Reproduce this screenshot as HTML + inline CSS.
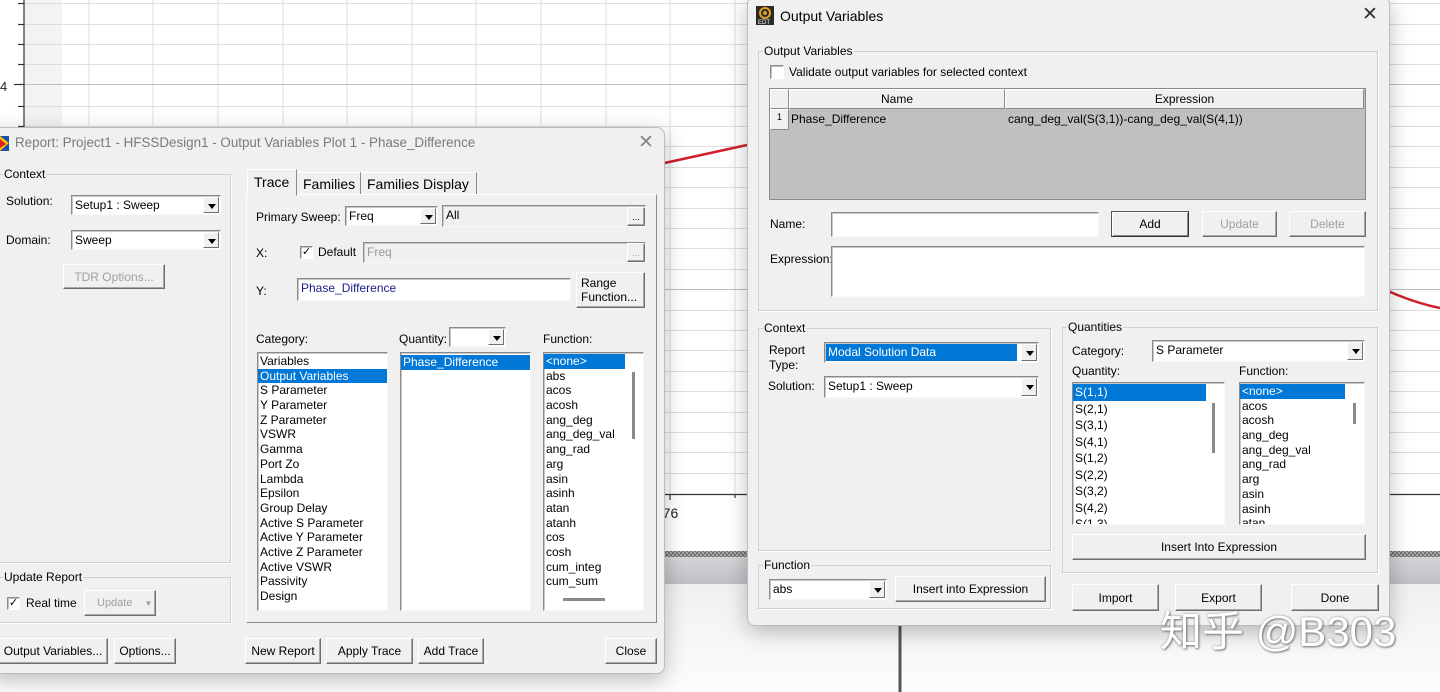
<!DOCTYPE html>
<html><head><meta charset="utf-8">
<style>
*{box-sizing:border-box;margin:0;padding:0}
body{width:1440px;height:692px;overflow:hidden;position:relative;background:#fff;font-family:"Liberation Sans",Arial,sans-serif;font-size:11px;color:#000}
.a{position:absolute}
.t{position:absolute;white-space:nowrap;line-height:13px}
.grp{position:absolute;border:1px solid #cfcfcf;box-shadow:1px 1px 0 #fff}
.grp>span{position:absolute;top:-8px;left:4px;background:#f0f0f0;padding:0 1px;line-height:14px;font-size:12px}
.btn{position:absolute;background:#f0f0f0;border:1px solid;border-color:#fff #6e6e6e #6e6e6e #fff;box-shadow:inset -1px -1px #a8a8a8;text-align:center;font-size:12px;display:flex;align-items:center;justify-content:center;white-space:nowrap}
.dis{color:#a0a0a0}
.in{position:absolute;background:#fff;border:1px solid;border-color:#8a8a8a #f8f8f8 #f8f8f8 #8a8a8a;box-shadow:inset 1px 1px #c8c8c8;padding-left:3px;line-height:19px;white-space:nowrap;overflow:hidden;font-size:12px}
.cb{position:absolute;background:#fff;border:1px solid;border-color:#8a8a8a #f8f8f8 #f8f8f8 #8a8a8a;box-shadow:inset 1px 1px #c8c8c8;padding-left:3px;line-height:19px;font-size:12px;white-space:nowrap}
.cb i{position:absolute;right:1px;top:1px;bottom:1px;width:16px;background:#f0f0f0;border:1px solid;border-color:#fff #6e6e6e #6e6e6e #fff}
.cb i:after{content:"";position:absolute;left:4px;top:6px;border-left:4px solid transparent;border-right:4px solid transparent;border-top:5px solid #000}
.list{position:absolute;background:#fff;border:1px solid;border-color:#8a8a8a #f8f8f8 #f8f8f8 #8a8a8a;box-shadow:inset 1px 1px #c8c8c8;overflow:hidden;font-size:12px}
.list div{height:14.7px;line-height:14.7px;padding-left:2px;white-space:nowrap}
.sel{background:#0078d7;color:#fff}
.chk{position:absolute;width:13px;height:13px;background:#fff;border:1px solid;border-color:#8a8a8a #fff #fff #8a8a8a;box-shadow:inset 1px 1px #c0c0c0;font-size:11px;line-height:11px;text-align:center}
.dlg{position:absolute;background:#f0f0f0;border:1px solid #bdbdbd;border-radius:8px;box-shadow:0 6px 22px rgba(0,0,0,.25)}
</style></head><body>

<svg class="a" style="left:0;top:0" width="1440" height="692">
<defs>
<linearGradient id="gb" x1="0" y1="0" x2="0" y2="1"><stop offset="0" stop-color="#d4d5d8"/><stop offset="1" stop-color="#bfc0c4"/></linearGradient>
<linearGradient id="gw" x1="0" y1="0" x2="0" y2="1"><stop offset="0" stop-color="#f0f0f0"/><stop offset="1" stop-color="#fdfdfd"/></linearGradient>
<pattern id="ck" width="4" height="4" patternUnits="userSpaceOnUse"><rect width="4" height="4" fill="#a8a8a8"/><rect width="2" height="2" fill="#707070"/><rect x="2" y="2" width="2" height="2" fill="#707070"/></pattern>
</defs>
<rect x="24" y="0" width="38" height="494" fill="#f3f3f3"/>
<g stroke="#dedede" stroke-width="1">
<line x1="89" y1="0" x2="89" y2="494"/><line x1="153" y1="0" x2="153" y2="494"/><line x1="218" y1="0" x2="218" y2="494"/><line x1="283" y1="0" x2="283" y2="494"/><line x1="347" y1="0" x2="347" y2="494"/><line x1="412" y1="0" x2="412" y2="494"/><line x1="476" y1="0" x2="476" y2="494"/><line x1="541" y1="0" x2="541" y2="494"/><line x1="606" y1="0" x2="606" y2="494"/><line x1="670" y1="0" x2="670" y2="494"/><line x1="735" y1="0" x2="735" y2="494"/>
<line x1="24" y1="3.5" x2="1440" y2="3.5"/><line x1="24" y1="24.5" x2="1440" y2="24.5"/><line x1="24" y1="44.5" x2="1440" y2="44.5"/><line x1="24" y1="64.5" x2="1440" y2="64.5"/><line x1="24" y1="106.5" x2="1440" y2="106.5"/><line x1="24" y1="126.5" x2="1440" y2="126.5"/>
<line x1="24" y1="146.5" x2="1440" y2="146.5"/><line x1="24" y1="167.5" x2="1440" y2="167.5"/><line x1="24" y1="187.5" x2="1440" y2="187.5"/><line x1="24" y1="208.5" x2="1440" y2="208.5"/><line x1="24" y1="228.5" x2="1440" y2="228.5"/><line x1="24" y1="248.5" x2="1440" y2="248.5"/><line x1="24" y1="269.5" x2="1440" y2="269.5"/><line x1="24" y1="310.5" x2="1440" y2="310.5"/><line x1="24" y1="330.5" x2="1440" y2="330.5"/><line x1="24" y1="350.5" x2="1440" y2="350.5"/><line x1="24" y1="371.5" x2="1440" y2="371.5"/><line x1="24" y1="391.5" x2="1440" y2="391.5"/><line x1="24" y1="412.5" x2="1440" y2="412.5"/><line x1="24" y1="432.5" x2="1440" y2="432.5"/><line x1="24" y1="452.5" x2="1440" y2="452.5"/><line x1="24" y1="473.5" x2="1440" y2="473.5"/>
</g>
<g stroke="#bdbdbd"><line x1="24" y1="84.5" x2="1440" y2="84.5"/><line x1="24" y1="289.5" x2="1440" y2="289.5"/></g>
<g stroke="#333" stroke-width="1.2">
<line x1="24" y1="0" x2="24" y2="130"/>
<line x1="18" y1="3.5" x2="24" y2="3.5"/><line x1="18" y1="24.5" x2="24" y2="24.5"/><line x1="18" y1="44.5" x2="24" y2="44.5"/><line x1="18" y1="64.5" x2="24" y2="64.5"/><line x1="14" y1="84.5" x2="24" y2="84.5"/><line x1="18" y1="106.5" x2="24" y2="106.5"/><line x1="18" y1="126.5" x2="24" y2="126.5"/>
<line x1="0" y1="494.5" x2="1440" y2="494.5"/><line x1="670" y1="494" x2="670" y2="500"/><line x1="735" y1="494" x2="735" y2="498"/>
</g>
<text x="0" y="91" font-family="Liberation Sans" font-size="13" fill="#222">4</text>
<text x="651" y="518" font-family="Liberation Sans" font-size="14" fill="#222">3.76</text>
<rect x="0" y="551" width="1440" height="6" fill="url(#ck)"/>
<rect x="0" y="557" width="1440" height="27" fill="url(#gb)"/>
<rect x="0" y="584" width="1440" height="108" fill="url(#gw)"/>
<line x1="900" y1="620" x2="900" y2="692" stroke="#555" stroke-width="3"/>
<path d="M660 164 L747 145" stroke="#d0202a" stroke-width="2.5" fill="none"/>
<path d="M1388 291 Q1415 303 1440 308" stroke="#d0202a" stroke-width="2.5" fill="none"/>
</svg>

<!-- LEFT DIALOG -->
<div class="dlg" style="left:-10px;top:127px;width:675px;height:547px"></div>
<svg class="a" style="left:0;top:136px" width="9" height="15"><rect width="9" height="15" fill="#1a4fb0"/><path d="M0 0 L9 7 L0 15Z" fill="#f3c200"/><path d="M0 3 L6 8 L0 12Z" fill="#e02020"/></svg>
<div class="t" style="left:15px;top:135px;font-size:13.4px;line-height:16px;color:#7a7a7a">Report: Project1 - HFSSDesign1 - Output Variables Plot 1 - Phase_Difference</div>
<div class="t" style="left:638px;top:133px;font-size:19px;line-height:20px;color:#888">✕</div>

<div class="grp" style="left:-2px;top:174px;width:233px;height:389px"><span>Context</span></div>
<div class="t" style="left:6px;top:195px;font-size:12px">Solution:</div>
<div class="cb" style="left:71px;top:195px;width:150px;height:20px">Setup1 : Sweep<i></i></div>
<div class="t" style="left:6px;top:234px;font-size:12px">Domain:</div>
<div class="cb" style="left:71px;top:230px;width:150px;height:20px">Sweep<i></i></div>
<div class="btn dis" style="left:63px;top:264px;width:102px;height:25px">TDR Options...</div>

<div class="grp" style="left:-2px;top:577px;width:233px;height:46px"><span>Update Report</span></div>
<div class="chk" style="left:7px;top:597px">✓</div>
<div class="t" style="left:26px;top:597px;font-size:12px">Real time</div>
<div class="btn dis" style="left:84px;top:590px;width:72px;height:26px;justify-content:flex-start;padding-left:12px;font-size:11px">Update <span style="margin-left:12px;font-size:8px">▼</span></div>

<div class="btn" style="left:-2px;top:638px;width:110px;height:26px">Output Variables...</div>
<div class="btn" style="left:114px;top:638px;width:62px;height:26px">Options...</div>

<div class="a" style="left:246px;top:194px;width:411px;height:429px;border:1px solid;border-color:#fff #8a8a8a #8a8a8a #fff"></div>
<div class="a" style="left:247px;top:169px;width:50px;height:27px;background:#f0f0f0;border:1px solid;border-color:#fff #8a8a8a transparent #fff"></div>
<div class="t" style="left:254px;top:174px;font-size:14px;line-height:16px">Trace</div>
<div class="a" style="left:298px;top:172px;width:63px;height:22px;border-right:1px solid #8a8a8a;border-top:1px solid #fff"></div>
<div class="t" style="left:303px;top:176px;font-size:14px;line-height:16px">Families</div>
<div class="a" style="left:362px;top:172px;width:115px;height:22px;border-right:1px solid #8a8a8a;border-top:1px solid #fff"></div>
<div class="t" style="left:367px;top:176px;font-size:14px;line-height:16px">Families Display</div>

<div class="t" style="left:256px;top:211px;font-size:12px">Primary Sweep:</div>
<div class="cb" style="left:345px;top:206px;width:93px;height:20px">Freq<i></i></div>
<div class="in" style="left:442px;top:205px;width:204px;height:22px;background:#f0f0f0;line-height:18px">All</div>
<div class="btn" style="left:627px;top:207px;width:18px;height:19px;font-size:9px">...</div>
<div class="t" style="left:256px;top:247px;font-size:12px">X:</div>
<div class="chk" style="left:300px;top:246px">✓</div>
<div class="t" style="left:318px;top:246px;font-size:12px">Default</div>
<div class="in" style="left:363px;top:242px;width:283px;height:21px;background:#f0f0f0;color:#999;line-height:18px">Freq</div>
<div class="btn dis" style="left:627px;top:243px;width:18px;height:19px;font-size:9px">...</div>
<div class="t" style="left:256px;top:285px;font-size:12px">Y:</div>
<div class="in" style="left:297px;top:278px;width:274px;height:23px;color:#1c1c8c">Phase_Difference</div>
<div class="btn" style="left:576px;top:272px;width:69px;height:36px;justify-content:flex-start;padding-left:4px;text-align:left;line-height:14px">Range<br>Function...</div>

<div class="t" style="left:256px;top:333px;font-size:12px">Category:</div>
<div class="t" style="left:399px;top:333px;font-size:12px">Quantity:</div>
<div class="cb" style="left:449px;top:327px;width:57px;height:20px"><i></i></div>
<div class="t" style="left:543px;top:333px;font-size:12px">Function:</div>

<div class="list" style="left:257px;top:352px;width:131px;height:259px;padding-top:1px">
<div>Variables</div><div class="sel">Output Variables</div><div>S Parameter</div><div>Y Parameter</div><div>Z Parameter</div><div>VSWR</div><div>Gamma</div><div>Port Zo</div><div>Lambda</div><div>Epsilon</div><div>Group Delay</div><div>Active S Parameter</div><div>Active Y Parameter</div><div>Active Z Parameter</div><div>Active VSWR</div><div>Passivity</div><div>Design</div></div>
<div class="list" style="left:400px;top:352px;width:131px;height:259px;padding-top:2px">
<div class="sel">Phase_Difference</div></div>
<div class="list" style="left:543px;top:352px;width:101px;height:259px;padding-top:1px">
<div class="sel" style="width:81px">&lt;none&gt;</div><div>abs</div><div>acos</div><div>acosh</div><div>ang_deg</div><div>ang_deg_val</div><div>ang_rad</div><div>arg</div><div>asin</div><div>asinh</div><div>atan</div><div>atanh</div><div>cos</div><div>cosh</div><div>cum_integ</div><div>cum_sum</div></div>
<div class="a" style="left:632px;top:372px;width:3px;height:67px;background:#8a8a8a"></div>
<div class="a" style="left:563px;top:598px;width:42px;height:3px;background:#8a8a8a"></div>

<div class="btn" style="left:245px;top:638px;width:76px;height:26px">New Report</div>
<div class="btn" style="left:326px;top:638px;width:87px;height:26px">Apply Trace</div>
<div class="btn" style="left:418px;top:638px;width:66px;height:26px">Add Trace</div>
<div class="btn" style="left:605px;top:638px;width:52px;height:26px">Close</div>

<!-- RIGHT DIALOG -->
<div class="dlg" style="left:747px;top:-4px;width:643px;height:630px"></div>
<svg class="a" style="left:756px;top:6px" width="18" height="19"><rect width="18" height="19" fill="#2a2a2a"/><circle cx="9" cy="7" r="5" fill="none" stroke="#e0a020" stroke-width="2"/><circle cx="9" cy="7" r="2" fill="#e0a020"/><text x="2" y="18" font-size="6" fill="#fff" font-family="Liberation Sans">EDT</text></svg>
<div class="t" style="left:780px;top:8px;font-size:14px;line-height:16px">Output Variables</div>
<div class="t" style="left:1362px;top:5px;font-size:19px;line-height:20px;color:#333">✕</div>

<div class="grp" style="left:758px;top:51px;width:620px;height:260px"><span>Output Variables</span></div>
<div class="chk" style="left:770px;top:65px;width:14px;height:14px"></div>
<div class="t" style="left:789px;top:66px;font-size:12px">Validate output variables for selected context</div>
<div class="a" style="left:769px;top:88px;width:597px;height:112px;background:#c0c0c0;border:1px solid #8a8a8a"></div>
<div class="a" style="left:770px;top:89px;width:19px;height:20px;background:#f0f0f0;border:1px solid;border-color:#fff #8a8a8a #8a8a8a #fff"></div>
<div class="a" style="left:789px;top:89px;width:216px;height:20px;background:#f0f0f0;border:1px solid;border-color:#fff #8a8a8a #8a8a8a #fff;text-align:center;line-height:18px;font-size:12px">Name</div>
<div class="a" style="left:1005px;top:89px;width:359px;height:20px;background:#f0f0f0;border:1px solid;border-color:#fff #8a8a8a #8a8a8a #fff;text-align:center;line-height:18px;font-size:12px">Expression</div>
<div class="a" style="left:770px;top:109px;width:19px;height:21px;background:#f0f0f0;border:1px solid;border-color:#fff #8a8a8a #8a8a8a #fff;text-align:center;font-size:9px;line-height:14px">1</div>
<div class="t" style="left:791px;top:113px;font-size:12px">Phase_Difference</div>
<div class="t" style="left:1008px;top:113px;font-size:12px">cang_deg_val(S(3,1))-cang_deg_val(S(4,1))</div>

<div class="t" style="left:770px;top:218px;font-size:12px">Name:</div>
<div class="in" style="left:831px;top:212px;width:268px;height:25px"></div>
<div class="btn" style="left:1111px;top:211px;width:78px;height:26px;border-color:#555 #333 #333 #555;box-shadow:inset 1px 1px #fff,inset -1px -1px #888">Add</div>
<div class="btn dis" style="left:1202px;top:211px;width:75px;height:26px">Update</div>
<div class="btn dis" style="left:1289px;top:211px;width:77px;height:26px">Delete</div>
<div class="t" style="left:770px;top:253px;font-size:12px">Expression:</div>
<div class="in" style="left:831px;top:246px;width:534px;height:51px"></div>

<div class="grp" style="left:758px;top:328px;width:293px;height:223px"><span>Context</span></div>
<div class="t" style="left:769px;top:343px;font-size:12px;line-height:15px">Report<br>Type:</div>
<div class="cb" style="left:824px;top:342px;width:215px;height:21px"><span class="sel" style="display:inline-block;width:191px;margin-left:-2px;padding-left:2px;line-height:17px">Modal Solution Data</span><i></i></div>
<div class="t" style="left:768px;top:380px;font-size:12px">Solution:</div>
<div class="cb" style="left:824px;top:376px;width:215px;height:22px">Setup1 : Sweep<i></i></div>

<div class="grp" style="left:758px;top:565px;width:293px;height:44px"><span>Function</span></div>
<div class="cb" style="left:769px;top:579px;width:118px;height:21px">abs<i></i></div>
<div class="btn" style="left:895px;top:576px;width:151px;height:26px">Insert into Expression</div>

<div class="grp" style="left:1062px;top:327px;width:316px;height:246px"><span>Quantities</span></div>
<div class="t" style="left:1072px;top:345px;font-size:12px">Category:</div>
<div class="cb" style="left:1152px;top:340px;width:213px;height:22px">S Parameter<i></i></div>
<div class="t" style="left:1072px;top:365px;font-size:12px">Quantity:</div>
<div class="t" style="left:1239px;top:365px;font-size:12px">Function:</div>
<div class="list" style="left:1072px;top:382px;width:153px;height:143px;padding-top:1px">
<div class="sel" style="width:133px;height:16.5px;line-height:16.5px">S(1,1)</div><div style="height:16.5px;line-height:16.5px">S(2,1)</div><div style="height:16.5px;line-height:16.5px">S(3,1)</div><div style="height:16.5px;line-height:16.5px">S(4,1)</div><div style="height:16.5px;line-height:16.5px">S(1,2)</div><div style="height:16.5px;line-height:16.5px">S(2,2)</div><div style="height:16.5px;line-height:16.5px">S(3,2)</div><div style="height:16.5px;line-height:16.5px">S(4,2)</div><div style="height:16.5px;line-height:16.5px">S(1,3)</div></div>
<div class="a" style="left:1212px;top:403px;width:3px;height:50px;background:#8a8a8a"></div>
<div class="list" style="left:1239px;top:382px;width:126px;height:143px;padding-top:1px">
<div class="sel" style="width:105px">&lt;none&gt;</div><div>acos</div><div>acosh</div><div>ang_deg</div><div>ang_deg_val</div><div>ang_rad</div><div>arg</div><div>asin</div><div>asinh</div><div>atan</div></div>
<div class="a" style="left:1353px;top:403px;width:3px;height:21px;background:#8a8a8a"></div>
<div class="btn" style="left:1072px;top:534px;width:294px;height:26px">Insert Into Expression</div>

<div class="btn" style="left:1072px;top:584px;width:87px;height:27px">Import</div>
<div class="btn" style="left:1175px;top:584px;width:87px;height:27px">Export</div>
<div class="btn" style="left:1291px;top:584px;width:88px;height:27px">Done</div>

<div class="t" style="left:1160px;top:609px;font-size:42px;line-height:46px;color:#fff;font-family:'Liberation Sans','Noto Sans CJK SC',sans-serif;text-shadow:1px 1px 2px #777,0 0 2px #999">知乎 @B303</div>
</body></html>
